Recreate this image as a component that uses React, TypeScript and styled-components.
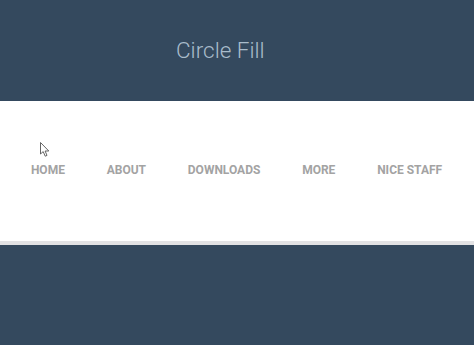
import React from "react";
import styled, { createGlobalStyle } from "styled-components";

const Global = createGlobalStyle`
  html, body { margin: 0; padding: 0; background: #34495e; }
  body { font-family: Roboto, "Liberation Sans", sans-serif; }
`;

const Page = styled.div`
  display: flex;
  flex-direction: column;
  width: 474px;
  height: 345px;
  overflow: hidden;
`;

const Header = styled.header`
  height: 101px;
  background: #34495e;
  display: flex;
  align-items: center;
  padding-left: 176px;
  box-sizing: border-box;
`;

const Title = styled.h1`
  margin: 0;
  font-family: Roboto, sans-serif;
  font-weight: 300;
  font-size: 22.5px;
  color: #a9bccb;
  letter-spacing: 0;
  padding-bottom: 2px;
`;

const NavBand = styled.nav`
  position: relative;
  height: 144px;
  background: #ffffff;
  display: flex;
  align-items: center;
  padding-left: 10px;
  padding-bottom: 2px;
  box-sizing: border-box;
  border-bottom: 4px solid #e2e2e4;
`;

const NavList = styled.ul`
  display: flex;
  list-style: none;
  margin: 0;
  padding: 0;
`;

const NavItem = styled.li`
  padding: 0 20.9px;
  font-family: Roboto, sans-serif;
  font-weight: 700;
  font-size: 12px;
  color: #a3a3a3;
  text-transform: uppercase;
  white-space: nowrap;
`;

const Cursor = styled.svg`
  position: absolute;
  left: 40px;
  top: 41px;
`;

const Footer = styled.div`
  flex: 1;
  background: #34495e;
`;

export default function App() {
  const items = ["Home", "About", "Downloads", "More", "Nice Staff"];
  return (
    <>
      <Global />
      <Page>
        <Header>
          <Title>Circle Fill</Title>
        </Header>
        <NavBand>
          <NavList>
            {items.map((i) => (
              <NavItem key={i}>{i}</NavItem>
            ))}
          </NavList>
          <Cursor width="11" height="16" viewBox="0 0 11 16">
            <path
              d="M0.5 0.5 L0.5 12 L3.2 9.6 L5.2 14.2 L7 13.4 L5.1 9 L8.8 9 Z"
              fill="#ffffff"
              stroke="#555"
              strokeWidth="0.9"
              strokeLinejoin="round"
            />
          </Cursor>
        </NavBand>
        <Footer />
      </Page>
    </>
  );
}
